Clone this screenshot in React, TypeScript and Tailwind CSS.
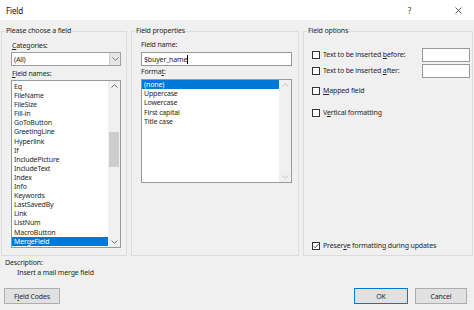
import React from "react";

const U = ({ children }: { children: React.ReactNode }) => (
  <span className="underline decoration-[0.6px] underline-offset-[1px]">{children}</span>
);

function ChevUp({ c }: { c: string }) {
  return (
    <svg width="7" height="4" viewBox="0 0 7 4">
      <polyline points="0.5,3.5 3.5,0.7 6.5,3.5" fill="none" stroke={c} strokeWidth="0.9" />
    </svg>
  );
}
function ChevDown({ c }: { c: string }) {
  return (
    <svg width="7" height="4" viewBox="0 0 7 4">
      <polyline points="0.5,0.5 3.5,3.3 6.5,0.5" fill="none" stroke={c} strokeWidth="0.9" />
    </svg>
  );
}

function CheckBox({ checked }: { checked?: boolean }) {
  return (
    <div className="w-[8px] h-[8px] border border-[#333] bg-white flex items-center justify-center shrink-0">
      {checked && (
        <svg width="6" height="6" viewBox="0 0 6 6">
          <polyline points="0.6,3.1 2.2,4.7 5.4,1.2" fill="none" stroke="#333" strokeWidth="0.9" />
        </svg>
      )}
    </div>
  );
}

const names = [
  "Eq",
  "FileName",
  "FileSize",
  "Fill-in",
  "GoToButton",
  "GreetingLine",
  "Hyperlink",
  "If",
  "IncludePicture",
  "IncludeText",
  "Index",
  "Info",
  "Keywords",
  "LastSavedBy",
  "Link",
  "ListNum",
  "MacroButton",
  "MergeField",
];

const formats = ["(none)", "Uppercase", "Lowercase", "First capital", "Title case"];

function Legend({ children }: { children: React.ReactNode }) {
  return (
    <div className="-mt-[6px] ml-[3px] px-[1px] w-fit h-[10px] leading-[10px] bg-[#f0f0f0]">{children}</div>
  );
}

export default function App() {
  return (
    <div className="w-[474px] h-[310px] bg-[#f0f0f0] flex flex-col overflow-hidden text-[7px] leading-[9px] tracking-[-0.15px] text-[#262626] font-['Noto_Sans',sans-serif]">
      {/* title bar */}
      <div className="h-[20px] bg-white flex items-center shrink-0">
        <div className="ml-[6px] text-[8px] text-[#111]">Field</div>
        <div className="ml-auto mr-[44px] text-[8px] text-[#333]">?</div>
        <svg className="mr-[12px]" width="7" height="7" viewBox="0 0 7 7">
          <line x1="0.5" y1="0.5" x2="6.5" y2="6.5" stroke="#333" strokeWidth="0.8" />
          <line x1="6.5" y1="0.5" x2="0.5" y2="6.5" stroke="#333" strokeWidth="0.8" />
        </svg>
      </div>

      {/* groups */}
      <div className="flex mt-[11px] ml-[1px] shrink-0">
        {/* left group */}
        <div className="w-[126px] h-[225px] border border-[#dcdcdc] flex flex-col pl-[9px]">
          <div className="-ml-[9px]">
            <Legend>Please choose a field</Legend>
          </div>
          <div className="mt-[5px] h-[10px] leading-[10px] pl-[1px]">
            <U>C</U>ategories:
          </div>
          <div className="mt-[1px] w-[110px] h-[14px] border border-[#a0a0a0] bg-white flex items-center">
            <div className="flex-1 pl-[2px]">(All)</div>
            <div className="w-[11px] h-full bg-[#e6e6e6] border-l border-[#cfcfcf] flex items-center justify-center">
              <ChevDown c="#707070" />
            </div>
          </div>
          <div className="mt-[3px] h-[10px] leading-[10px] pl-[1px]">
            <U>F</U>ield names:
          </div>
          <div className="mt-[1px] w-[110px] h-[168px] border border-[#999] bg-white flex">
            <div className="flex-1 pt-[1px] leading-[9.1px]">
              {names.map((n) => (
                <div
                  key={n}
                  className={n === "MergeField" ? "bg-[#0078d7] text-white pl-[2px]" : "pl-[2px]"}
                >
                  {n}
                </div>
              ))}
            </div>
            <div className="w-[12px] bg-[#f0f0f0] flex flex-col">
              <div className="h-[10px] flex items-center justify-center">
                <ChevUp c="#606060" />
              </div>
              <div className="h-[41px]" />
              <div className="h-[35px] mx-[1px] bg-[#cdcdcd]" />
              <div className="flex-1" />
              <div className="h-[10px] flex items-center justify-center">
                <ChevDown c="#606060" />
              </div>
            </div>
          </div>
        </div>

        {/* middle group */}
        <div className="ml-[4px] w-[168px] h-[225px] border border-[#dcdcdc] flex flex-col pl-[9px]">
          <div className="-ml-[9px]">
            <Legend>Field properties</Legend>
          </div>
          <div className="mt-[4px] h-[10px] leading-[10px]">Field name:</div>
          <div className="mt-[2px] w-[151px] h-[14px] border border-[#999] bg-white flex items-center pl-[2px]">
            <span>$buyer_name</span>
            <span className="w-[1px] h-[9px] bg-black" />
          </div>
          <div className="mt-[1px] h-[10px] leading-[10px]">
            Forma<U>t</U>:
          </div>
          <div className="mt-[2px] w-[151px] h-[104px] border border-[#999] bg-white flex">
            <div className="flex-1 leading-[9.2px]">
              {formats.map((f) => (
                <div
                  key={f}
                  className={f === "(none)" ? "bg-[#0078d7] text-white pl-[2px]" : "pl-[2px]"}
                >
                  {f}
                </div>
              ))}
            </div>
            <div className="w-[12px] bg-[#f0f0f0] flex flex-col justify-between">
              <div className="h-[10px] flex items-center justify-center">
                <ChevUp c="#bfbfbf" />
              </div>
              <div className="h-[10px] flex items-center justify-center">
                <ChevDown c="#bfbfbf" />
              </div>
            </div>
          </div>
        </div>

        {/* right group */}
        <div className="ml-[4px] w-[170px] h-[225px] border border-[#dcdcdc] flex flex-col pl-[8px]">
          <div className="-ml-[8px]">
            <Legend>Field options</Legend>
          </div>
          <div className="mt-[11px] h-[15px] flex items-center">
            <CheckBox />
            <span className="ml-[3px]">
              Text to be inserted <U>b</U>efore:
            </span>
            <div className="ml-auto mr-[2px] w-[48px] h-[14px] border border-[#999] bg-white" />
          </div>
          <div className="mt-[1px] h-[15px] flex items-center">
            <CheckBox />
            <span className="ml-[3px]">
              Text to be inserted <U>a</U>fter:
            </span>
            <div className="ml-auto mr-[2px] w-[48px] h-[14px] border border-[#999] bg-white" />
          </div>
          <div className="mt-[5px] h-[15px] flex items-center">
            <CheckBox />
            <span className="ml-[3px]">
              <U>M</U>apped field
            </span>
          </div>
          <div className="mt-[7px] h-[15px] flex items-center">
            <CheckBox />
            <span className="ml-[3px]">
              V<U>e</U>rtical formatting
            </span>
          </div>
          <div className="mt-auto mb-[2px] h-[15px] flex items-center">
            <CheckBox checked />
            <span className="ml-[3px]">
              Preser<U>v</U>e formatting during updates
            </span>
          </div>
        </div>
      </div>

      {/* description */}
      <div className="mt-[2px] ml-[5px] h-[9px]">Description:</div>
      <div className="mt-[1px] ml-[17px] h-[9px]">Insert a mail merge field</div>

      {/* buttons */}
      <div className="mt-[11px] flex items-center">
        <div className="ml-[4px] w-[56px] h-[16px] bg-[#e1e1e1] border border-[#adadad] flex items-center justify-center">
          F<U>i</U>eld Codes
        </div>
        <div className="ml-auto w-[54px] h-[16px] bg-[#e1e1e1] border border-[#0078d7] flex items-center justify-center">
          OK
        </div>
        <div className="ml-[7px] mr-[7px] w-[52px] h-[16px] bg-[#e1e1e1] border border-[#adadad] flex items-center justify-center">
          Cancel
        </div>
      </div>
    </div>
  );
}
